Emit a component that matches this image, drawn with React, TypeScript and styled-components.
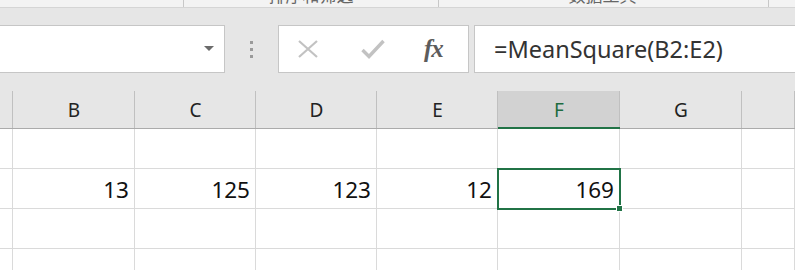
import styled, { createGlobalStyle } from "styled-components";

const GlobalStyle = createGlobalStyle`
    * { box-sizing:border-box; }
    body {
        margin:0; background:#ffffff; overflow:hidden;
        font-family:"Noto Sans", "Open Sans", "Noto Sans CJK SC", sans-serif;
    }
`

const Page = styled.div`
    height:270px; overflow:hidden;
`

const Ribbon = styled.div`
    height:8px; background:#f3f3f3;
    border-bottom:1px solid #d5d5d5;
    display:flex; overflow:hidden;
`

const RibbonGroup = styled.div<{ $w: number }>`
    width:${p => p.$w}px; flex:none;
    border-right:1px solid #c8c8c8;
    display:flex; justify-content:center;
    overflow:hidden;
`

const RibbonLabel = styled.span<{ $shift: number }>`
    font-size:17px; line-height:17px; color:#666;
    margin-top:-13px; margin-left:${p => p.$shift}px;
    white-space:nowrap;
`

const FormulaBar = styled.div`
    height:78px; background:#e6e6e6;
    padding:17px 0 13px 0;
    display:flex; align-items:stretch;
`

const NameBox = styled.div`
    width:225px; flex:none;
    background:#fff; border:1px solid #c6c6c6; border-left:none;
    display:flex; align-items:center; justify-content:flex-end;
    padding-right:10px;
`

const Grip = styled.div`
    width:53px; flex:none;
    display:flex; flex-direction:column; align-items:center; justify-content:center; gap:4px;
    & span { width:3px; height:3px; background:#9a9a9a; }
`

const ButtonBox = styled.div`
    width:191px; flex:none;
    background:#fff; border:1px solid #c6c6c6;
    display:flex; align-items:center;
    padding:0 0 0 18px;
`

const IconButton = styled.div<{ $w: number }>`
    width:${p => p.$w}px; height:36px; flex:none;
    display:flex; align-items:center; justify-content:flex-start;
`

const Fx = styled.span`
    font-family:"Liberation Serif", "DejaVu Serif", serif;
    font-style:italic; font-weight:700; font-size:25px; color:#5c5c5c;
    letter-spacing:-1px;
`

const FormulaInput = styled.div`
    flex:1; margin-left:5px;
    background:#fff; border:1px solid #c6c6c6; border-right:none;
    display:flex; align-items:center;
    padding-left:19px;
    font-size:23.5px; color:#333;
`

const Sheet = styled.div`
    display:grid;
    grid-template-columns:13px 122px 121px 121px 121px 122px 122px 1fr;
    grid-auto-rows:40px;
    grid-template-rows:43px;
`

const HeaderCell = styled.div<{ $active?: boolean }>`
    background:#e6e6e6;
    border-bottom:${p => p.$active ? "2px solid #217346" : "1px solid #ababab"};
    position:relative;
    display:flex; align-items:center; justify-content:center;
    font-size:19px; padding-top:6px;
    color:${p => p.$active ? "#1d6b40" : "#222"};

    & > i {
        position:absolute; top:5px; bottom:0; left:0; right:0;
        background:${p => p.$active ? "#d2d2d2" : "transparent"};
        border-right:1px solid #c0c0c0;
        z-index:0;
    }
    & > b { position:relative; z-index:1; font-weight:400; }
`

const Cell = styled.div<{ $selected?: boolean }>`
    border-right:1px solid #dadada;
    border-bottom:1px solid #dadada;
    display:flex; align-items:center; justify-content:flex-end;
    padding:2px 5px 0 0;
    font-size:22.5px; color:#111;
    position:relative;
    ${p => p.$selected ? `
        outline:2px solid #217346;
        outline-offset:-1px;
        z-index:2;
    ` : ""}
`

const FillHandle = styled.span`
    position:absolute; right:-4px; bottom:-4px;
    width:7px; height:7px; background:#217346;
    border:1px solid #fff;
`

const columns = ["", "B", "C", "D", "E", "F", "G", ""];
const data: string[][] = [
    ["", "", "", "", "", "", "", ""],
    ["", "13", "125", "123", "12", "169", "", ""],
    ["", "", "", "", "", "", "", ""],
    ["", "", "", "", "", "", "", ""],
];

const App = () => {
    return (
        <Page>
            <GlobalStyle />
            <Ribbon>
                <RibbonGroup $w={184}></RibbonGroup>
                <RibbonGroup $w={255}><RibbonLabel $shift={0}>排序和筛选</RibbonLabel></RibbonGroup>
                <RibbonGroup $w={330}><RibbonLabel $shift={-2}>数据工具</RibbonLabel></RibbonGroup>
            </Ribbon>
            <FormulaBar>
                <NameBox>
                    <svg width="10" height="6" viewBox="0 0 10 6">
                        <path d="M0 0 L10 0 L5 5 Z" fill="#6b6b6b" />
                    </svg>
                </NameBox>
                <Grip><span /><span /><span /></Grip>
                <ButtonBox>
                    <IconButton $w={64}>
                        <svg width="22" height="18" viewBox="0 0 22 18">
                            <path d="M2 1 L20 17 M20 1 L2 17" stroke="#c2c2c2" strokeWidth="2.2" />
                        </svg>
                    </IconButton>
                    <IconButton $w={63}>
                        <svg width="24" height="20" viewBox="0 0 24 20">
                            <path d="M1.5 11 L8 17.5 L22.5 2" stroke="#c2c2c2" strokeWidth="3.4" fill="none" />
                        </svg>
                    </IconButton>
                    <IconButton $w={30}><Fx>fx</Fx></IconButton>
                </ButtonBox>
                <FormulaInput>=MeanSquare(B2:E2)</FormulaInput>
            </FormulaBar>
            <Sheet>
                {columns.map((c, i) => (
                    <HeaderCell key={i} $active={c === "F"}>
                        <i />
                        <b>{c}</b>
                    </HeaderCell>
                ))}
                {data.map((row, r) =>
                    row.map((v, c) => {
                        const selected = r === 1 && c === 5;
                        return (
                            <Cell key={`${r}-${c}`} $selected={selected}>
                                {v}
                                {selected ? <FillHandle /> : null}
                            </Cell>
                        );
                    })
                )}
            </Sheet>
        </Page>
    );
};

export default App;
